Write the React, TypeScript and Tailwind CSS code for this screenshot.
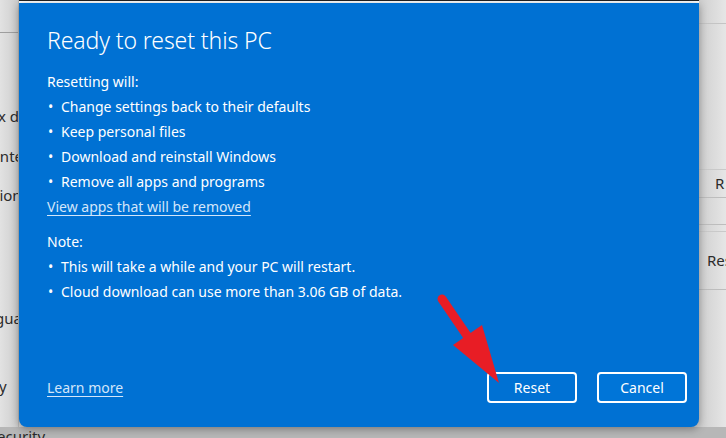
import React from "react";

const font = { fontFamily: '"Noto Sans", "Open Sans", sans-serif' };

function Bullet({ children }: { children: React.ReactNode }) {
  return (
    <div className="flex h-[25px] items-center">
      <span className="w-[14px] pl-[1px] text-[14px]">•</span>
      <span>{children}</span>
    </div>
  );
}

export default function App() {
  return (
    <div
      className="relative h-[438px] w-[726px] overflow-hidden bg-[#d3d3d3] text-[#2b2b2b]"
      style={font}
    >
      {/* dimmed settings background */}
      <div className="flex h-full w-full">
        <div className="relative flex w-[19px] flex-col overflow-hidden bg-gradient-to-r from-[#e2e2e2] to-[#cdcdcd] border-r border-[#b9b9b9]">
          <div className="h-[33px] border-b border-[#9e9e9e]" />
          <div className="flex flex-col text-[15px] whitespace-nowrap">
            <div className="mt-[72px] ml-[-2px]">x de</div>
            <div className="mt-[17px] ml-[-4px]">inte</div>
            <div className="mt-[17px] ml-[-6px]">tion</div>
            <div className="mt-[100px] ml-[-5px]">gua</div>
            <div className="mt-[46px] ml-[-1px]">y</div>
          </div>
        </div>
        <div className="flex-1" />
        <div className="flex w-[27px] flex-col bg-gradient-to-r from-[#cfcfcf] to-[#e6e6e6] text-[15px]">
          <div className="h-[24px] border-b border-[#c4c4c4]" />
          <div className="h-[146px] border-b border-[#c9c9c9]" />
          <div className="flex h-[28px] items-center border-b border-[#bdbdbd] pl-[16px]">R</div>
          <div className="h-[27px] border-b border-[#bdbdbd]" />
          <div className="h-[7px] border-b border-[#c9c9c9]" />
          <div className="flex h-[58px] items-center border-b border-[#bdbdbd] pl-[8px] whitespace-nowrap overflow-hidden">Res</div>
        </div>
      </div>

      {/* bottom band */}
      <div className="absolute bottom-0 left-0 flex h-[11px] w-full items-end bg-[#b7b7b7] text-[15px] leading-[15px]">
        <span className="ml-[-3px] mb-[-6px]">ecurity</span>
      </div>

      {/* top strip of the screen edge */}
      <div className="absolute left-[19px] top-0 h-[3px] w-[680px] border-t border-[#222] bg-white" />

      {/* dialog */}
      <div className="absolute left-[19px] top-[3px] flex h-[424px] w-[680px] flex-col rounded-b-[8px] bg-[#0071d3] px-[28px] text-[14px] text-white shadow-[0_2px_8px_rgba(0,0,0,0.35)]">
        <div className="mt-[21px] text-[23px] font-light leading-[32px] tracking-[-0.1px]">
          Ready to reset this PC
        </div>
        <div className="mt-[13px] flex h-[25px] items-center">Resetting will:</div>
        <Bullet>Change settings back to their defaults</Bullet>
        <Bullet>Keep personal files</Bullet>
        <Bullet>Download and reinstall Windows</Bullet>
        <Bullet>Remove all apps and programs</Bullet>
        <div className="flex h-[25px] items-center text-[#d3e6fa] underline underline-offset-[3px]">
          View apps that will be removed
        </div>
        <div className="mt-[10px] flex h-[25px] items-center">Note:</div>
        <Bullet>This will take a while and your PC will restart.</Bullet>
        <Bullet>Cloud download can use more than 3.06 GB of data.</Bullet>
        <div className="mt-auto mb-[24px] flex items-center justify-between">
          <span className="text-[#d3e6fa] underline underline-offset-[3px]">Learn more</span>
          <div className="flex gap-[20px] mr-[-16px]">
            <button className="h-[31px] w-[90px] rounded-[4px] border-2 border-white text-[14px] text-white">
              Reset
            </button>
            <button className="h-[31px] w-[90px] rounded-[4px] border-2 border-white bg-[#0075d8] text-[14px] text-white">
              Cancel
            </button>
          </div>
        </div>
      </div>

      {/* red annotation arrow */}
      <svg className="absolute left-0 top-0" width="726" height="438" viewBox="0 0 726 438">
        <line x1="442" y1="299" x2="470" y2="340" stroke="#e81d25" strokeWidth="9" strokeLinecap="round" />
        <polygon points="453,345 482,325 499,383" fill="#e81d25" />
      </svg>
    </div>
  );
}
